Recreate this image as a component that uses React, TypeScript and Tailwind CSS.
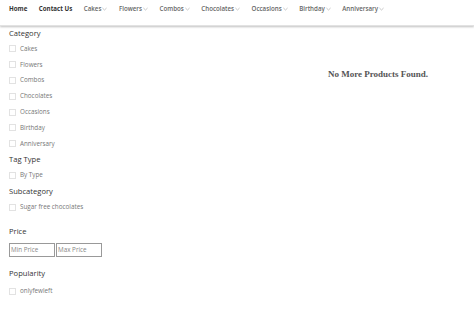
import React from "react";

const Chevron = () => (
  <svg width="5" height="4" viewBox="0 0 6 4" className="ml-[1px] mt-[1px]" fill="none" stroke="#aaa" strokeWidth="0.8">
    <path d="M0.5 0.8 L3 3.2 L5.5 0.8" />
  </svg>
);

const navItems = [
  { label: "Home", bold: true },
  { label: "Contact Us", bold: true },
  { label: "Cakes" },
  { label: "Flowers" },
  { label: "Combos" },
  { label: "Chocolates" },
  { label: "Occasions" },
  { label: "Birthday" },
  { label: "Anniversary" },
];

const Check = ({ label }: { label: string }) => (
  <div className="flex items-center h-[15.8px]">
    <span className="w-[7px] h-[7px] border border-[#e2e2e2] bg-white mr-[4px]" />
    <span className="text-[6.3px] text-[#777] leading-none">{label}</span>
  </div>
);

const Heading = ({ children, className = "" }: { children: React.ReactNode; className?: string }) => (
  <div className={"text-[7.6px] text-[#333] leading-none " + className}>{children}</div>
);

export default function App() {
  return (
    <div className="w-[474px] h-[315px] bg-white overflow-hidden" style={{ fontFamily: '"Open Sans", sans-serif' }}>
      <header className="h-[26px] flex items-center pl-[9px] gap-[11.5px] shadow-[0_1px_2px_rgba(0,0,0,0.25)] border-b border-[#e2e2e2] pb-[7px]">
        {navItems.map((n) => (
          <div key={n.label} className="flex items-center">
            <span className={"text-[6.2px] leading-none " + (n.bold ? "font-bold text-[#333]" : "font-semibold text-[#666]")}>
              {n.label}
            </span>
            {!n.bold && <Chevron />}
          </div>
        ))}
      </header>
      <div className="flex">
        <aside className="w-[282px] pl-[9px] pt-[2px]">
          <Heading className="h-[12px] flex items-center">Category</Heading>
          <div className="mt-[1px]">
            {["Cakes", "Flowers", "Combos", "Chocolates", "Occasions", "Birthday", "Anniversary"].map((c) => (
              <Check key={c} label={c} />
            ))}
          </div>
          <Heading className="h-[16px] flex items-center">Tag Type</Heading>
          <Check label="By Type" />
          <Heading className="h-[16px] flex items-center">Subcategory</Heading>
          <Check label="Sugar free chocolates" />
          <Heading className="h-[16px] flex items-center mt-[9px]">Price</Heading>
          <div className="flex gap-[1px] mt-[3px]">
            <div className="w-[46px] h-[14px] border border-[#999] flex items-center px-[1px] text-[6.3px] text-[#888]">Min Price</div>
            <div className="w-[46px] h-[14px] border border-[#999] flex items-center px-[1px] text-[6.3px] text-[#888]">Max Price</div>
          </div>
          <Heading className="h-[16px] flex items-center mt-[9px]">Popularity</Heading>
          <div className="mt-[1px]">
            <Check label="onlyfewleft" />
          </div>
        </aside>
        <main className="flex-1 flex justify-center pt-[44px]">
          <div className="text-[9px] font-bold text-[#555] leading-none" style={{ fontFamily: '"Liberation Serif", serif' }}>
            No More Products Found.
          </div>
        </main>
      </div>
    </div>
  );
}
